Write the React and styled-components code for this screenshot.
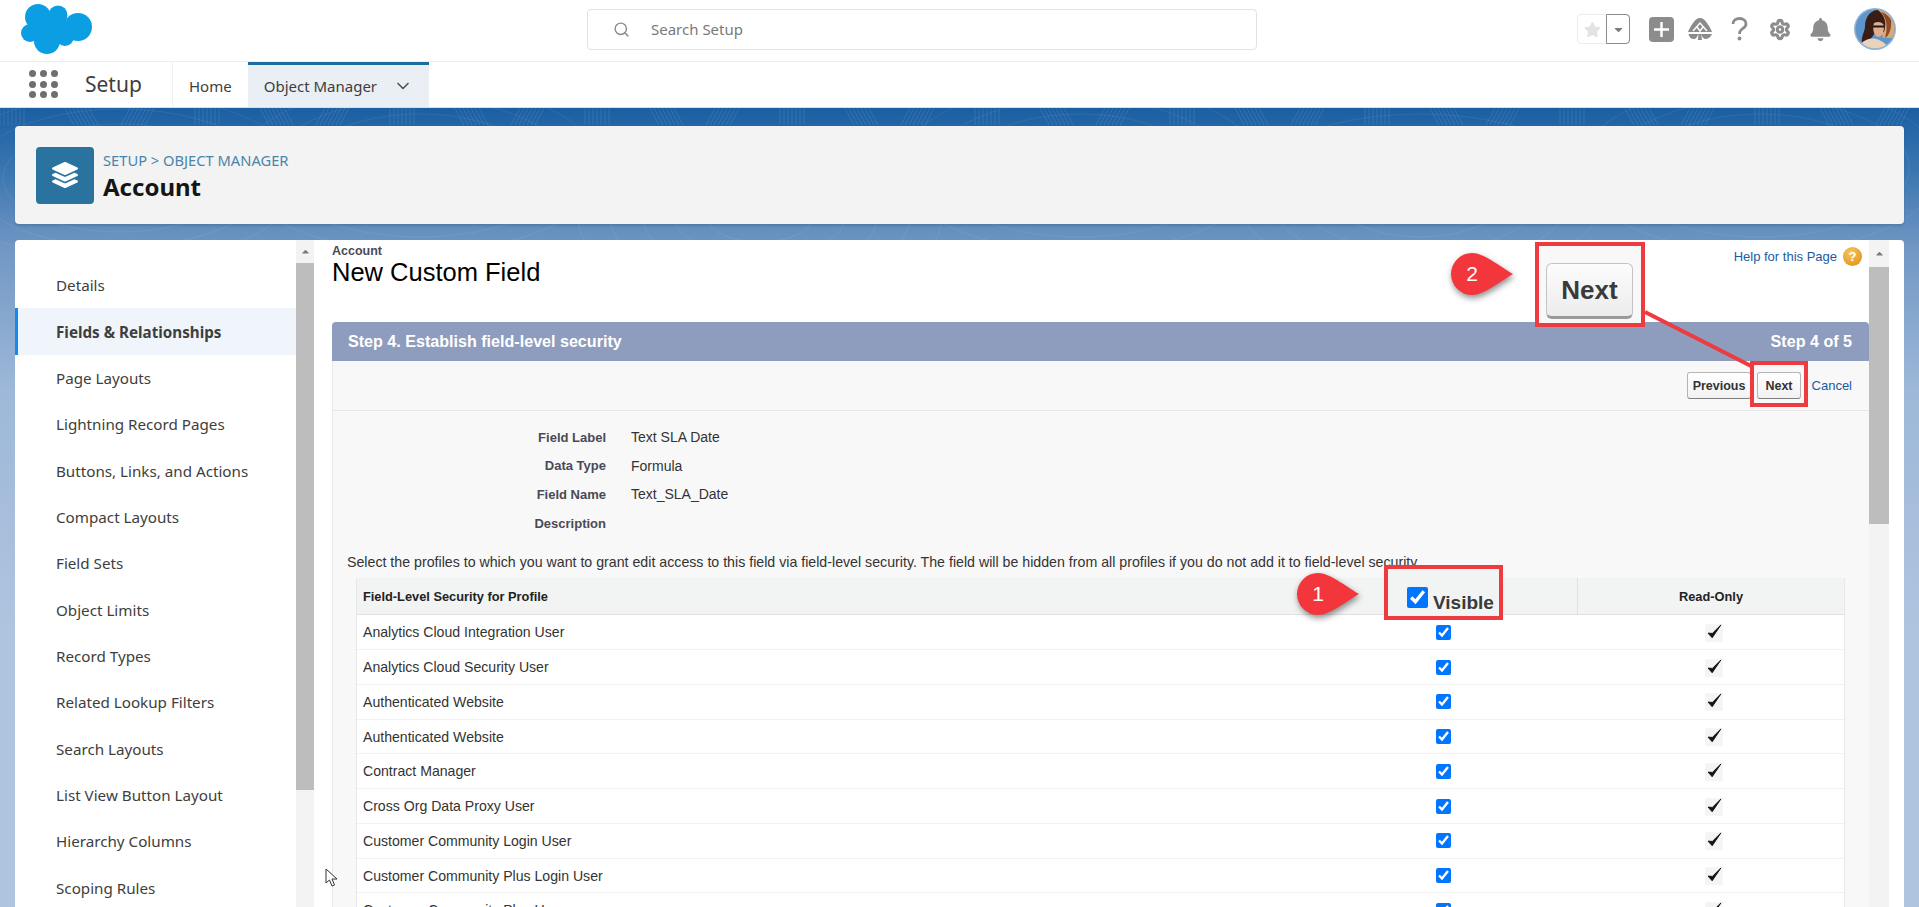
import React from 'react'
import styled, { createGlobalStyle } from 'styled-components'
import { FaBell, FaStar, FaCaretDown, FaCaretUp, FaLayerGroup } from 'react-icons/fa'
import { FiSearch, FiChevronDown } from 'react-icons/fi'
import { Settings } from 'lucide-react'

const GlobalStyle = createGlobalStyle`
  html, body {
    margin: 0;
    padding: 0;
    background: #fff;
  }
  * {
    box-sizing: border-box;
  }
`

const lightning = `'Noto Sans', 'Open Sans', sans-serif`
const classic = `'Liberation Sans', Arial, sans-serif`

const Page = styled.div`
  position: relative;
  width: 1919px;
  height: 907px;
  overflow: hidden;
  display: flex;
  flex-direction: column;
  font-family: ${lightning};
`

const GlobalBar = styled.header`
  height: 62px;
  flex: none;
  display: flex;
  align-items: center;
  padding: 0 23px 0 21px;
  background: #fff;
  border-bottom: 1px solid #eeeeee;
`

const Logo = styled.svg`
  width: 71px;
  height: 50px;
  flex: none;
  margin-top: -3px;
`

const SearchBox = styled.div`
  width: 670px;
  height: 41px;
  margin-left: 495px;
  margin-top: -3px;
  display: flex;
  align-items: center;
  gap: 21px;
  padding-left: 25px;
  background: #fff;
  border: 1px solid #e2e2e2;
  border-radius: 4px;
  color: #7a7a7a;
  font-size: 15px;
  svg {
    font-size: 17px;
    color: #8a8a8a;
  }
`

const ActionTray = styled.div`
  margin-left: auto;
  display: flex;
  align-items: center;
  margin-top: -3px;
  color: #8c8c8c;
`

const FavoriteGroup = styled.div`
  width: 53px;
  height: 30px;
  display: flex;
  margin-right: 19px;
  border: 1px solid #ececec;
  border-radius: 4px;
`

const FavoriteStar = styled.span`
  width: 29px;
  display: flex;
  align-items: center;
  justify-content: center;
  color: #e3e3e3;
  font-size: 17px;
`

const FavoriteMenu = styled.span`
  flex: 1;
  display: flex;
  align-items: center;
  justify-content: center;
  border: 1px solid #8a8a8a;
  border-radius: 0 4px 4px 0;
  margin: -1px;
  color: #7d7d7d;
  font-size: 13px;
`

const IconSlot = styled.span`
  width: ${props => props.width}px;
  height: 25px;
  margin-right: ${props => props.gap}px;
  display: flex;
  align-items: center;
  justify-content: center;
  font-size: 23px;
`

const Avatar = styled.svg`
  width: 42px;
  height: 42px;
  flex: none;
  margin-left: 3px;
`

const NavBar = styled.nav`
  height: 46px;
  flex: none;
  display: flex;
  background: #fff;
  border-bottom: 1px solid #dddddd;
`

const AppLauncher = styled.div`
  width: 29px;
  height: 28px;
  margin: 8px 0 0 29px;
  display: grid;
  grid-template-columns: repeat(3, 7px);
  grid-template-rows: repeat(3, 7px);
  justify-content: space-between;
  align-content: space-between;
`

const Dot = styled.span`
  border-radius: 50%;
  background: #6f6f6f;
`

const AppName = styled.div`
  width: 115px;
  padding-left: 27px;
  line-height: 44px;
  font-size: 21px;
  color: #3e3e3c;
  border-right: 1px solid #f0f0f0;
  flex: none;
`

const Tab = styled.div`
  height: 45px;
  display: flex;
  align-items: center;
  gap: 16px;
  padding: 0 16px;
  font-size: 15px;
  color: #3e3e3c;
  background: ${props => (props.active ? '#e9eff4' : '#fff')};
  border-top: 3px solid ${props => (props.active ? '#1f6d9f' : 'transparent')};
  svg {
    font-size: 20px;
    color: #555;
  }
`

const Stage = styled.main`
  position: relative;
  flex: 1;
  min-height: 0;
  display: flex;
  flex-direction: column;
  gap: 16px;
  padding: 18px 15px 0;
  background: linear-gradient(180deg, #1a5fa3 0, #3f78b2 70px, #7197c4 140px, #9db8d8 280px, #afc4df 520px);
`

const Contours = styled.svg`
  position: absolute;
  top: 0;
  left: 0;
  width: 100%;
  height: 300px;
`

const PageHeader = styled.section`
  position: relative;
  height: 98px;
  flex: none;
  display: flex;
  align-items: center;
  gap: 9px;
  padding: 0 21px;
  background: #f3f3f3;
  border-radius: 4px;
  box-shadow: 0 2px 2px rgba(0, 0, 0, 0.12);
`

const ObjectIcon = styled.div`
  width: 58px;
  height: 57px;
  flex: none;
  display: flex;
  align-items: center;
  justify-content: center;
  border-radius: 4px;
  background: #2a739e;
  color: #fff;
  font-size: 26px;
`

const Crumbs = styled.div`
  margin-top: 2px;
  font-size: 14.7px;
  line-height: 20px;
  color: #4a85ab;
`

const ObjectTitle = styled.h1`
  margin: 2px 0 0;
  font-size: 24px;
  line-height: 30px;
  font-weight: 700;
  color: #151515;
`

const Workspace = styled.section`
  position: relative;
  flex: 1;
  min-height: 0;
  display: flex;
  background: #fff;
  border-radius: 4px 4px 0 0;
`

const Sidebar = styled.ul`
  width: 281px;
  flex: none;
  list-style: none;
  margin: 0;
  padding: 22px 0 0;
`

const SideItem = styled.li`
  height: 46.35px;
  display: flex;
  align-items: center;
  padding-left: ${props => (props.active ? '38px' : '41px')};
  font-size: 15.2px;
  font-weight: ${props => (props.active ? 700 : 400)};
  color: #3e3e3c;
  background: ${props => (props.active ? '#eff5fb' : 'transparent')};
  border-left: ${props => (props.active ? '3px solid #1589ee' : '0')};
`

const ScrollBar = styled.div`
  width: ${props => props.width}px;
  flex: none;
  display: flex;
  flex-direction: column;
  align-items: center;
  background: #f3f3f3;
  color: #7a7a7a;
  font-size: 11px;
`

const ScrollArrow = styled.div`
  height: ${props => props.height}px;
  display: flex;
  align-items: center;
  justify-content: center;
`

const ScrollThumb = styled.div`
  width: 100%;
  height: ${props => props.height}px;
  background: #bdbdbd;
`

const Content = styled.div`
  width: 1555px;
  flex: none;
  padding: 5px 0 0 18px;
  font-family: ${classic};
  overflow: hidden;
`

const TitleBlock = styled.div`
  position: relative;
  height: 77px;
`

const BackLabel = styled.div`
  font-size: 12.5px;
  line-height: 12px;
  font-weight: 700;
  color: #4a4a56;
`

const PageTitle = styled.h2`
  margin: 1px 0 0;
  font-size: 25.5px;
  line-height: 29px;
  font-weight: 400;
  color: #000;
`

const HelpLink = styled.div`
  position: absolute;
  top: 2px;
  right: 7px;
  display: flex;
  align-items: center;
  gap: 6px;
  font-size: 13px;
  color: #1a5c9f;
`

const HelpBadge = styled.span`
  width: 19px;
  height: 19px;
  display: flex;
  align-items: center;
  justify-content: center;
  border-radius: 50%;
  background: radial-gradient(circle at 40% 30%, #f7c65c, #dd8a12);
  color: #fff;
  font-size: 13px;
  font-weight: 700;
`

const StepHeader = styled.div`
  height: 39px;
  width: 1537px;
  display: flex;
  align-items: center;
  justify-content: space-between;
  padding: 0 17px 0 16px;
  background: #8e9dbe;
  border-radius: 4px 4px 0 0;
  color: #fff;
  font-size: 16.1px;
  font-weight: 700;
`

const StepBody = styled.div`
  width: 1537px;
  background: #f8f8f8;
  border-left: 1px solid #eaeaea;
`

const ButtonRow = styled.div`
  height: 50px;
  display: flex;
  align-items: center;
  justify-content: flex-end;
  gap: 6px;
  padding-right: 17px;
  border-bottom: 1px solid #e6e6e6;
`

const ClassicButton = styled.button`
  height: 27px;
  padding: 0 ${props => props.pad}px;
  font-family: ${classic};
  font-size: 12.5px;
  font-weight: 700;
  color: #333;
  background: linear-gradient(180deg, #fff, #f2f2f2);
  border: 1px solid #b5b5b5;
  border-bottom-color: #7f7f7f;
  border-radius: 3px;
`

const CancelLink = styled.span`
  margin-left: 5px;
  font-size: 13px;
  color: #1a5c9f;
`

const DetailGrid = styled.dl`
  display: grid;
  grid-template-columns: 273px 1fr;
  grid-auto-rows: 28.6px;
  column-gap: 25px;
  align-items: center;
  margin: 12px 0 0;
  font-size: 14px;
`

const DetailLabel = styled.dt`
  text-align: right;
  font-size: 13px;
  font-weight: 700;
  color: #4a4a56;
`

const DetailValue = styled.dd`
  margin: 0;
  color: #333;
`

const Intro = styled.p`
  margin: 18px 0 0 14px;
  font-size: 14.2px;
  line-height: 14px;
  white-space: nowrap;
  color: #333;
`

const FieldTable = styled.div`
  width: 1489px;
  margin: 9px 0 0 23px;
  background: #fff;
  border-left: 1px solid #e8e8e8;
  border-right: 1px solid #e8e8e8;
`

const TableRow = styled.div`
  display: grid;
  grid-template-columns: 952px 268px 1fr;
  align-items: center;
  height: ${props => (props.head ? '37px' : '34.75px')};
  background: ${props => (props.head ? '#f2f3f3' : '#fff')};
  border-bottom: 1px solid ${props => (props.head ? '#e0e0e0' : '#f1f1f1')};
  font-size: ${props => (props.head ? '12.8px' : '14.1px')};
  color: #333;
`

const ProfileCell = styled.div`
  padding-left: 6px;
  font-weight: ${props => (props.head ? 700 : 400)};
  color: ${props => (props.head ? '#222' : '#333')};
`

const ToggleCell = styled.div`
  height: 100%;
  display: flex;
  align-items: center;
  justify-content: center;
  font-weight: 700;
  color: #222;
  border-left: ${props => (props.divided ? '1px solid #e0e0e0' : '0')};
`

const CheckBox = styled.input`
  width: 15px;
  height: 15px;
  margin: 0;
  accent-color: #0075ff;
`

const ReadOnlyMark = styled.svg`
  width: 21px;
  height: 21px;
  margin-left: 7px;
`

// annotations drawn on top of the screenshot
const Callout = styled.div`
  position: absolute;
  left: ${props => props.left}px;
  top: ${props => props.top}px;
  width: ${props => props.width}px;
  height: ${props => props.height}px;
  border: 4px solid #ed3b3f;
  background: ${props => props.fill || 'transparent'};
`

const ConnectorLine = styled.svg`
  position: absolute;
  left: 1640px;
  top: 305px;
  width: 120px;
  height: 70px;
`

const ZoomedNext = styled.div`
  position: absolute;
  left: 1546px;
  top: 263px;
  width: 87px;
  height: 56px;
  display: flex;
  align-items: center;
  justify-content: center;
  font-family: ${classic};
  font-size: 26px;
  font-weight: 700;
  color: #3a3a3a;
  background: linear-gradient(180deg, #fcfcfc, #ececec);
  border: 1px solid #c4c4c4;
  border-bottom: 3px solid #9a9a9a;
  border-radius: 6px;
`

const ZoomedVisible = styled.div`
  position: absolute;
  left: 1387px;
  top: 568px;
  width: 113px;
  height: 49px;
  display: flex;
  align-items: flex-end;
  gap: 5px;
  padding: 0 0 3px 20px;
  background: #f2f3f3;
  font-family: ${classic};
  font-size: 19px;
  line-height: 22px;
  font-weight: 700;
  color: #3a3a3a;
`

const ZoomedCheck = styled(CheckBox)`
  width: 21px;
  height: 21px;
  margin-bottom: 6px;
`

const Marker = styled.div`
  position: absolute;
  left: ${props => props.left}px;
  top: ${props => props.top}px;
  width: 62px;
  height: 42px;
  svg {
    display: block;
    overflow: visible;
    filter: drop-shadow(1px 3px 3px rgba(0, 0, 0, 0.45));
  }
`

const MarkerNumber = styled.span`
  position: absolute;
  left: 0;
  top: 0;
  width: 42px;
  line-height: 42px;
  text-align: center;
  font-family: ${classic};
  font-size: 21px;
  color: #fff;
`

const Cursor = styled.svg`
  position: absolute;
  left: 325px;
  top: 868px;
  width: 14px;
  height: 20px;
`

const menuItems = [
  'Details', 'Fields & Relationships', 'Page Layouts', 'Lightning Record Pages',
  'Buttons, Links, and Actions', 'Compact Layouts', 'Field Sets', 'Object Limits',
  'Record Types', 'Related Lookup Filters', 'Search Layouts', 'List View Button Layout',
  'Hierarchy Columns', 'Scoping Rules'
]

const profiles = [
  'Analytics Cloud Integration User', 'Analytics Cloud Security User', 'Authenticated Website',
  'Authenticated Website', 'Contract Manager', 'Cross Org Data Proxy User',
  'Customer Community Login User', 'Customer Community Plus Login User',
  'Customer Community Plus User'
]

const details = [
  ['Field Label', 'Text SLA Date'],
  ['Data Type', 'Formula'],
  ['Field Name', 'Text_SLA_Date'],
  ['Description', '']
]

const contourCentres = [[120, 70], [420, 60], [760, 110], [1080, 60], [1420, 90], [1760, 60]]
const hatchClusters = Array.from({ length: 30 }, (_, i) => i)

const BackgroundContours = () =>
  <Contours viewBox="0 0 1919 300" preserveAspectRatio="none">
    {contourCentres.map(([cx, cy]) =>
      [40, 65, 90, 115, 140].map(r =>
        <ellipse key={`${cx}-${r}`} cx={cx} cy={cy} rx={r * 1.3} ry={r * 0.6} fill="none" stroke="rgba(255,255,255,0.07)" />
      )
    )}
    {hatchClusters.map(i =>
      [0, 4, 8, 12, 16, 20, 24].map(dx =>
        <line
          key={`${i}-${dx}`}
          x1={i * 65 + dx}
          y1="0"
          x2={i * 65 + dx + (i % 3 === 0 ? 0 : i % 3 === 1 ? 9 : -9)}
          y2="17"
          stroke="rgba(255,255,255,0.1)"
        />
      )
    )}
  </Contours>

const CloudLogo = () =>
  <Logo viewBox="0 0 71 50">
    <g fill="#0b9ee3">
      <circle cx="32" cy="24" r="16" />
      <circle cx="17" cy="13" r="13" />
      <circle cx="37" cy="11" r="9.5" />
      <circle cx="57" cy="23" r="14" />
      <circle cx="26" cy="37" r="13" />
      <circle cx="9" cy="29" r="9" />
      <circle cx="44" cy="33" r="9" />
    </g>
  </Logo>

const PlusIcon = () =>
  <svg width="25" height="25" viewBox="0 0 25 25">
    <rect width="25" height="25" rx="4" fill="#8c8c8c" />
    <path d="M12.5 5v15M5 12.5h15" stroke="#fff" strokeWidth="2.4" />
  </svg>

const TrailIcon = () =>
  <svg width="24" height="24" viewBox="0 0 24 24">
    <path d="M12 1 C15 1 17 3 19 6 C21 9 23 12 24 15 H0 C1 12 3 9 5 6 C7 3 9 1 12 1Z" fill="#8c8c8c" />
    <path d="M0.5 17 H24 C23 20 20 22 17 22 C15 21 14 20 13 17 L14 23 H10 L10.5 17 C9 20 8 22 6 22 C3 22 1 20 0.5 17Z" fill="#8c8c8c" />
    <path d="M5 14 L12 6 L19 14 M9 10 L12 14 L15 10" fill="none" stroke="#fff" strokeWidth="1.4" />
  </svg>

const QuestionIcon = () =>
  <svg width="17" height="24" viewBox="0 0 17 24">
    <path d="M2 7 C2 3.5 5 1.5 8.5 1.5 C12.5 1.5 15 4 15 7 C15 10 12.5 11 10.5 12.5 C9 13.6 8.5 14.6 8.5 17" fill="none" stroke="#8c8c8c" strokeWidth="2.8" />
    <circle cx="8.5" cy="21.5" r="1.9" fill="#8c8c8c" />
  </svg>

const PortraitAvatar = () =>
  <Avatar viewBox="0 0 42 42">
    <defs>
      <clipPath id="avatarClip"><circle cx="21" cy="21" r="19.5" /></clipPath>
    </defs>
    <circle cx="21" cy="21" r="21" fill="#8fb4d6" />
    <g clipPath="url(#avatarClip)">
      <rect width="42" height="42" fill="#5e95cb" />
      <path d="M22 0 H42 V30 H29Z" fill="#d8a877" />
      <path d="M24 2 C16 2 11 10 11 18 C11 24 7 28 8 34 C14 34 18 30 20 26 L30 24 C32 18 33 9 24 2Z" fill="#3a1d14" />
      <path d="M27 4 C33 10 34 20 31 30 C35 28 38 20 37 12 C35 8 31 5 27 4Z" fill="#8a4a2a" />
      <path d="M20 15 C24 13 29 14 30 18 C30 24 28 29 24 29 C20 28 18 21 20 15Z" fill="#e0ae8c" />
      <path d="M19 18.5 H30" stroke="#1a1a1a" strokeWidth="2" />
      <path d="M4 42 C6 34 14 29 22 31 C28 32 34 38 36 42Z" fill="#e9d3bd" />
    </g>
  </Avatar>

const CheckMark = () =>
  <ReadOnlyMark viewBox="0 0 18 18">
    <rect x="1" y="2" width="15" height="15" fill="#f4f4f4" />
    <path d="M3.5 9.5 L7 13.5 L14.5 2.5 L7.2 9.8Z" fill="#111" stroke="#111" strokeWidth="0.8" />
  </ReadOnlyMark>

const Teardrop = ({ left, top, number }) =>
  <Marker left={left} top={top}>
    <svg width="62" height="42" viewBox="0 0 62 42">
      <path d="M21 0 C33 0 48 13 62 21 C48 29 33 42 21 42 A21 21 0 0 1 21 0Z" fill="#f2363c" />
    </svg>
    <MarkerNumber>{number}</MarkerNumber>
  </Marker>

export default function App() {
  return (
    <Page>
      <GlobalStyle />
      <GlobalBar>
        <CloudLogo />
        <SearchBox>
          <FiSearch />
          Search Setup
        </SearchBox>
        <ActionTray>
          <FavoriteGroup>
            <FavoriteStar><FaStar /></FavoriteStar>
            <FavoriteMenu><FaCaretDown /></FavoriteMenu>
          </FavoriteGroup>
          <IconSlot width={25} gap={14}><PlusIcon /></IconSlot>
          <IconSlot width={24} gap={19}><TrailIcon /></IconSlot>
          <IconSlot width={17} gap={21}><QuestionIcon /></IconSlot>
          <IconSlot width={22} gap={17}><Settings size={25} strokeWidth={3.4} /></IconSlot>
          <IconSlot width={24} gap={19}><FaBell /></IconSlot>
          <PortraitAvatar />
        </ActionTray>
      </GlobalBar>
      <NavBar>
        <AppLauncher>
          {Array.from({ length: 9 }).map((_, i) => <Dot key={i} />)}
        </AppLauncher>
        <AppName>Setup</AppName>
        <Tab>Home</Tab>
        <Tab active>Object Manager <FiChevronDown /></Tab>
      </NavBar>
      <Stage>
        <BackgroundContours />
        <PageHeader>
          <ObjectIcon><FaLayerGroup /></ObjectIcon>
          <div>
            <Crumbs>SETUP &gt; OBJECT MANAGER</Crumbs>
            <ObjectTitle>Account</ObjectTitle>
          </div>
        </PageHeader>
        <Workspace>
          <Sidebar>
            {menuItems.map(item =>
              <SideItem key={item} active={item === 'Fields & Relationships'}>{item}</SideItem>
            )}
          </Sidebar>
          <ScrollBar width={18}>
            <ScrollArrow height={23}><FaCaretUp /></ScrollArrow>
            <ScrollThumb height={527} />
          </ScrollBar>
          <Content>
            <TitleBlock>
              <BackLabel>Account</BackLabel>
              <PageTitle>New Custom Field</PageTitle>
              <HelpLink>Help for this Page <HelpBadge>?</HelpBadge></HelpLink>
            </TitleBlock>
            <StepHeader>
              <span>Step 4. Establish field-level security</span>
              <span>Step 4 of 5</span>
            </StepHeader>
            <StepBody>
              <ButtonRow>
                <ClassicButton pad={5}>Previous</ClassicButton>
                <ClassicButton pad={7}>Next</ClassicButton>
                <CancelLink>Cancel</CancelLink>
              </ButtonRow>
              <DetailGrid>
                {details.map(([label, value]) =>
                  <React.Fragment key={label}>
                    <DetailLabel>{label}</DetailLabel>
                    <DetailValue>{value}</DetailValue>
                  </React.Fragment>
                )}
              </DetailGrid>
              <Intro>Select the profiles to which you want to grant edit access to this field via field-level security. The field will be hidden from all profiles if you do not add it to field-level security.</Intro>
              <FieldTable>
                <TableRow head>
                  <ProfileCell head>Field-Level Security for Profile</ProfileCell>
                  <ToggleCell />
                  <ToggleCell divided>Read-Only</ToggleCell>
                </TableRow>
                {profiles.map((name, i) =>
                  <TableRow key={i}>
                    <ProfileCell>{name}</ProfileCell>
                    <ToggleCell><CheckBox type="checkbox" defaultChecked /></ToggleCell>
                    <ToggleCell><CheckMark /></ToggleCell>
                  </TableRow>
                )}
              </FieldTable>
            </StepBody>
          </Content>
          <ScrollBar width={20}>
            <ScrollArrow height={27}><FaCaretUp /></ScrollArrow>
            <ScrollThumb height={257} />
          </ScrollBar>
        </Workspace>
      </Stage>

      <ConnectorLine viewBox="0 0 120 70">
        <path d="M5 7 L113 62" stroke="#ed3b3f" strokeWidth="4" />
      </ConnectorLine>
      <Callout left={1535} top={242} width={110} height={85} fill="#f8f8f8" />
      <ZoomedNext>Next</ZoomedNext>
      <Callout left={1750} top={361} width={58} height={46} />
      <Teardrop left={1451} top={253} number="2" />
      <ZoomedVisible>
        <ZoomedCheck type="checkbox" defaultChecked />
        Visible
      </ZoomedVisible>
      <Callout left={1384} top={565} width={119} height={55} />
      <Teardrop left={1297} top={573} number="1" />
      <Cursor viewBox="0 0 14 20">
        <path d="M1 1 V15 L4.5 12 L7 18 L9.5 17 L7 11 H12Z" fill="#fff" stroke="#333" />
      </Cursor>
    </Page>
  )
}
